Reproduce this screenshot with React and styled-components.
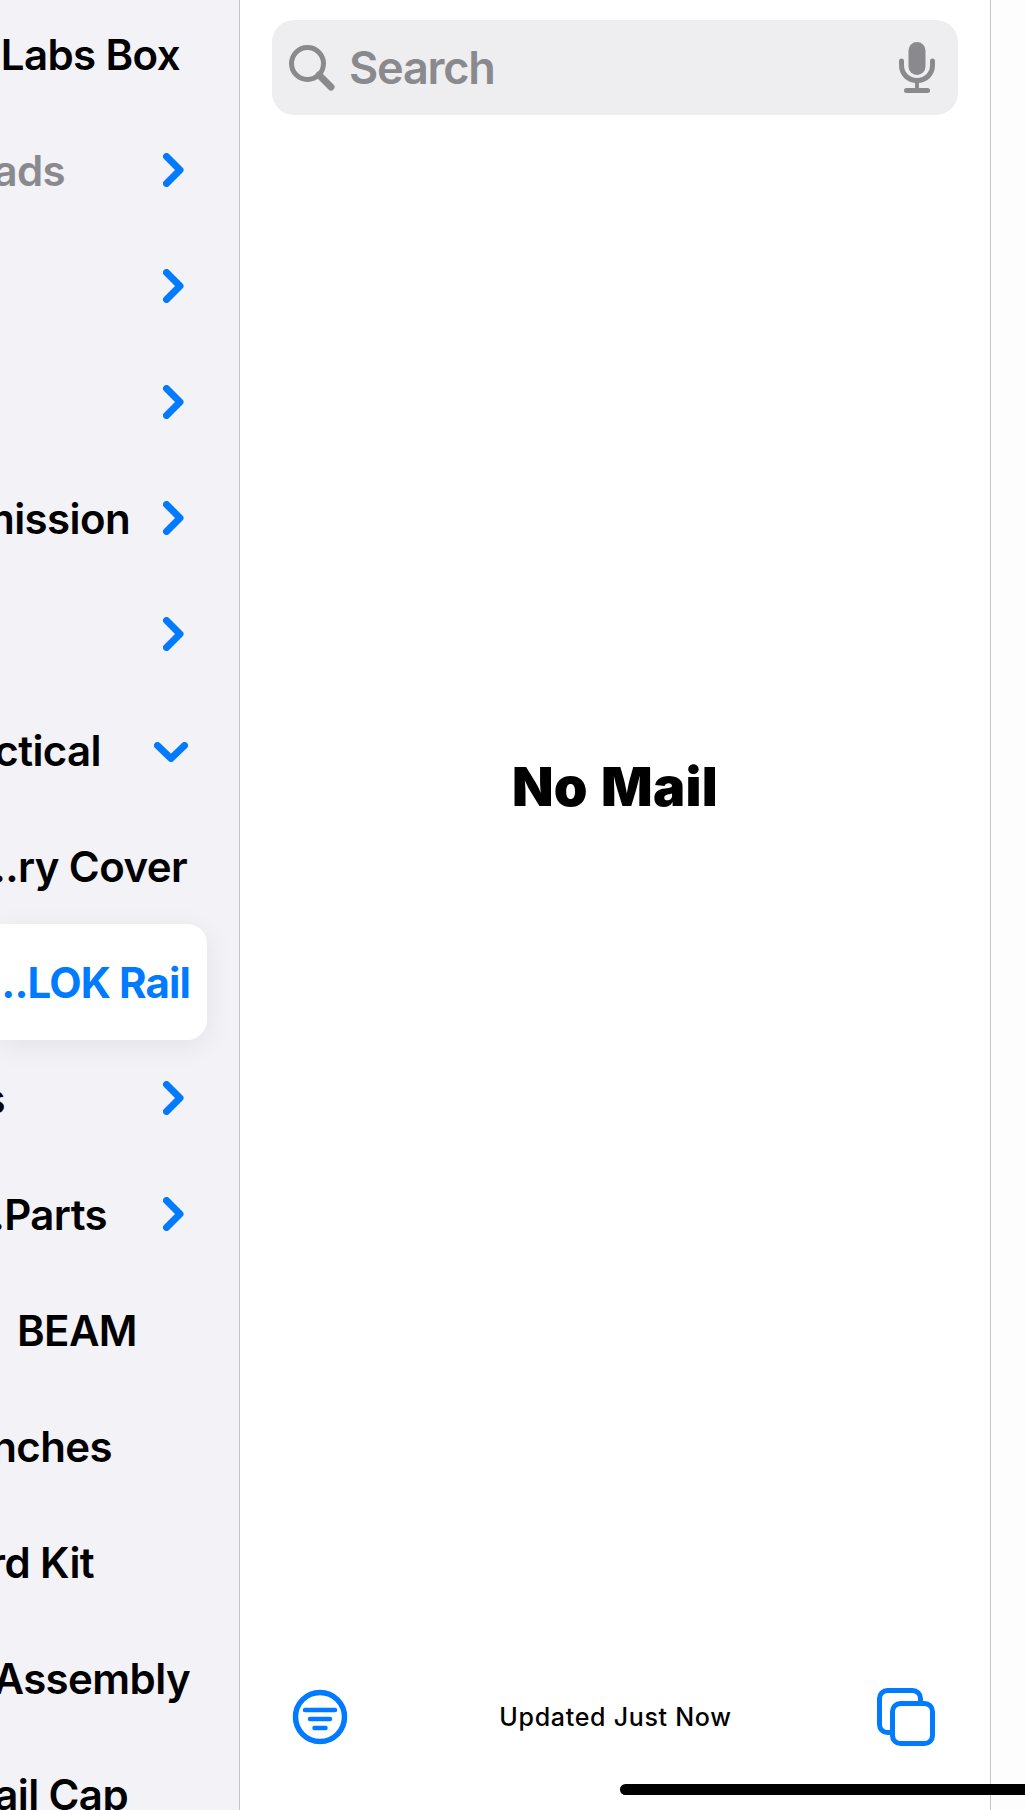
import React from 'react'
import styled, { createGlobalStyle } from 'styled-components'

const rows = [
  { text: 'Labs Box', end: 180 },
  { text: 'ads', end: 65, muted: true, chevron: 'right' },
  { text: '', end: 0, chevron: 'right' },
  { text: '', end: 0, chevron: 'right' },
  { text: 'mission', end: 130, chevron: 'right' },
  { text: '', end: 0, chevron: 'right' },
  { text: 'ctical', end: 101, chevron: 'down' },
  { text: '...ry Cover', end: 187 },
  { text: '...LOK Rail', end: 190, active: true },
  { text: 's', end: 5, chevron: 'right' },
  { text: '.Parts', end: 107, chevron: 'right' },
  { text: 'BEAM', end: 137 },
  { text: 'nches', end: 112 },
  { text: 'rd Kit', end: 94 },
  { text: 'Assembly', end: 190 },
  { text: 'ail Cap', end: 128 },
]

const Chevron = ({ direction }) =>
  direction === 'down' ? (
    <DownIcon viewBox="0 0 34 20" fill="none">
      <path d="M3.500 3.500L17 16.500 30.500 3.500" stroke="#007aff" strokeWidth="7" strokeLinecap="round" strokeLinejoin="round" />
    </DownIcon>
  ) : (
    <RightIcon viewBox="0 0 21 34" fill="none">
      <path d="M3.500 3.500L17 17 3.500 30.500" stroke="#007aff" strokeWidth="7" strokeLinecap="round" strokeLinejoin="round" />
    </RightIcon>
  )

export default function App() {
  return (
    <>
      <GlobalStyle />
      <Page>
        <Sidebar>
          {rows.map((row, i) => (
            <Row key={i} $active={row.active}>
              <Label $end={row.end} $muted={row.muted} $active={row.active}>
                <span>{row.text}</span>
              </Label>
              {row.chevron && <Chevron direction={row.chevron} />}
            </Row>
          ))}
        </Sidebar>

        <MailPane>
          <SearchBar>
            <svg width="46" height="46" viewBox="0 0 46 46" fill="none">
              <circle cx="18.5" cy="18.5" r="16" stroke="#8a8a8e" strokeWidth="5" />
              <path d="M30 30l12 12" stroke="#8a8a8e" strokeWidth="7" strokeLinecap="round" />
            </svg>
            <SearchText>Search</SearchText>
            <svg width="36" height="52" viewBox="0 0 36 52" fill="none">
              <rect x="9.5" y="0" width="17" height="33" rx="8.5" fill="#8a8a8e" />
              <path d="M2.5 19v4c0 9 6.5 15.5 15.5 15.5S33.5 32 33.5 23v-4" stroke="#8a8a8e" strokeWidth="5" strokeLinecap="round" />
              <path d="M18 38v10" stroke="#8a8a8e" strokeWidth="4" />
              <path d="M7.5 48.5h21" stroke="#8a8a8e" strokeWidth="5" strokeLinecap="round" />
            </svg>
          </SearchBar>

          <Empty>No Mail</Empty>

          <Toolbar>
            <svg width="56" height="56" viewBox="0 0 56 56" fill="none">
              <circle cx="28" cy="28" r="24.500" stroke="#007aff" strokeWidth="5.500" />
              <path d="M13 21h30M18 30h20M22.500 39h11" stroke="#007aff" strokeWidth="4.500" strokeLinecap="round" />
            </svg>
            <Status>Updated Just Now</Status>
            <svg width="58" height="58" viewBox="0 0 58 58" fill="none">
              <rect x="2.500" y="2.500" width="41" height="42" rx="8" stroke="#007aff" strokeWidth="5" />
              <rect x="15.500" y="15.500" width="40" height="40" rx="8" fill="#fff" stroke="#007aff" strokeWidth="5" />
            </svg>
          </Toolbar>
        </MailPane>

        <DetailPane />
        <HomeIndicator />
      </Page>
    </>
  )
}

const GlobalStyle = createGlobalStyle`
  html, body {
    margin: 0;
    padding: 0;
    background: #fff;
  }
  body {
    font-family: Inter, "Liberation Sans", sans-serif;
  }
`

const Page = styled.div`
  position: relative;
  display: flex;
  width: 1025px;
  height: 1810px;
  overflow: hidden;
`

const Sidebar = styled.nav`
  display: flex;
  flex-flow: column;
  flex: 0 0 240px;
  box-sizing: border-box;
  overflow: hidden;
  background: #f2f2f7;
  border-right: 1px solid #c6c6c8;
`

const Row = styled.div`
  display: flex;
  flex: 0 0 116px;
  align-items: center;
  justify-content: space-between;
  box-sizing: border-box;
  width: 207px;
  padding-right: 23px;

  &:first-child {
    margin-top: -4px;
  }

  ${props =>
    props.$active &&
    `
    background: #fff;
    border-radius: 0 20px 20px 0;
    box-shadow: 0 6px 30px rgba(0, 0, 0, 0.07);
  `}
`

const Label = styled.div`
  display: flex;
  flex: 0 0 ${props => props.$end}px;
  justify-content: flex-end;
  min-width: 0;
  white-space: nowrap;

  color: ${props => (props.$active ? '#007aff' : props.$muted ? '#8a8a8e' : '#000')};
  font-size: 42px;
  font-weight: ${props => (props.$active ? 680 : 570)};
  letter-spacing: ${props => (props.$active ? '-0.9px' : '-0.6px')};
`

const RightIcon = styled.svg`
  flex: none;
  width: 21px;
  height: 34px;
`

const DownIcon = styled.svg`
  flex: none;
  width: 34px;
  height: 20px;
  margin-top: 3px;
  margin-right: -4px;
`

const MailPane = styled.main`
  display: flex;
  flex-flow: column;
  flex: 0 0 751px;
  box-sizing: border-box;
  background: #fff;
  border-right: 1px solid #c6c6c8;
`

const SearchBar = styled.div`
  display: flex;
  align-items: center;
  flex: none;
  height: 95px;
  margin: 20px 32px 0;
  padding: 0 23px 0 17px;
  background: #eeeef0;
  border-radius: 22px;
`

const SearchText = styled.div`
  flex: 1;
  margin-left: 14px;

  color: #8a8a8e;
  font-size: 45px;
  font-weight: 600;
  letter-spacing: -1.2px;
`

const Empty = styled.div`
  display: flex;
  flex: 1;
  align-items: center;
  justify-content: center;
  padding-bottom: 230px;

  color: #000;
  font-size: 54px;
  font-weight: 900;
  letter-spacing: 0.3px;
  word-spacing: 2px;
`

const Toolbar = styled.div`
  display: flex;
  flex: none;
  align-items: center;
  justify-content: space-between;
  height: 58px;
  margin-bottom: 64px;
  padding: 0 55px 0 52px;
`

const Status = styled.div`
  margin-left: 6px;

  color: #000;
  font-size: 25px;
  font-weight: 550;
  letter-spacing: 0.7px;
`

const DetailPane = styled.aside`
  flex: 1;
  background: #fdfdfd;
`

const HomeIndicator = styled.div`
  position: absolute;
  left: 620px;
  top: 1784px;
  width: 520px;
  height: 11px;
  background: #000;
  border-radius: 6px;
`
